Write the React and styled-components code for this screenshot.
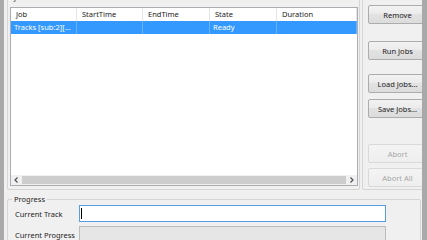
import styled, { createGlobalStyle } from "styled-components";

const GlobalStyle = createGlobalStyle`
  html, body {
    margin: 0;
    padding: 0;
    background: #f0f0f0;
  }
  body {
    font-family: "Noto Sans", "Open Sans", sans-serif;
    font-size: 7.5px;
    color: #1e1e1e;
  }
`;

const columns = [
  { name: "Job", width: 66 },
  { name: "StartTime", width: 66 },
  { name: "EndTime", width: 67 },
  { name: "State", width: 67 },
  { name: "Duration", width: 80 },
];

const jobs = [
  { job: "Tracks [sub:2][...", start: "", end: "", state: "Ready", duration: "" },
];

const actions = [
  { label: "Remove", gap: 0 },
  { label: "Run Jobs", gap: 17 },
  { label: "Load Jobs...", gap: 14 },
  { label: "Save Jobs...", gap: 6 },
  { label: "Abort", gap: 26, disabled: true },
  { label: "Abort All", gap: 5, disabled: true },
];

const gridCols = columns.map((c) => c.width + "px").join(" ");

const App = () => {
  return (
    <Window>
      <GlobalStyle />
      <TopRow>
        <JobsGroup>
          <GroupLabel>Jobs</GroupLabel>
          <ListBox>
            <Header>
              {columns.map((c) => (
                <HeaderCell key={c.name}>{c.name}</HeaderCell>
              ))}
            </Header>
            <Rows>
              {jobs.map((j, i) => (
                <Row key={i} $selected={i === 0}>
                  <Cell>{j.job}</Cell>
                  <Cell>{j.start}</Cell>
                  <Cell>{j.end}</Cell>
                  <Cell>{j.state}</Cell>
                  <Cell>{j.duration}</Cell>
                </Row>
              ))}
            </Rows>
            <HScroll>
              <ScrollArrow>
                <svg width="5" height="6" viewBox="0 0 5 6">
                  <path d="M3.5 0.5 L1 3 L3.5 5.5" fill="none" stroke="#505050" strokeWidth="1.2" />
                </svg>
              </ScrollArrow>
              <ScrollTrack>
                <ScrollThumb />
              </ScrollTrack>
              <ScrollArrow>
                <svg width="5" height="6" viewBox="0 0 5 6">
                  <path d="M1.5 0.5 L4 3 L1.5 5.5" fill="none" stroke="#505050" strokeWidth="1.2" />
                </svg>
              </ScrollArrow>
            </HScroll>
          </ListBox>
        </JobsGroup>
        <ActionsGroup>
          <GroupLabel>Actions</GroupLabel>
          {actions.map((a) => (
            <ActionButton key={a.label} $gap={a.gap} disabled={a.disabled}>
              {a.label}
            </ActionButton>
          ))}
        </ActionsGroup>
      </TopRow>
      <ProgressGroup>
        <GroupLabel>Progress</GroupLabel>
        <FieldRow>
          <FieldLabel>Current Track</FieldLabel>
          <TextField>
            <Caret />
          </TextField>
        </FieldRow>
        <FieldRow>
          <FieldLabel>Current Progress</FieldLabel>
          <ProgressBar />
        </FieldRow>
      </ProgressGroup>
    </Window>
  );
};

const Window = styled.div`
  width: 427px;
  height: 240px;
  box-sizing: border-box;
  overflow: hidden;
  display: flex;
  flex-direction: column;
  border-left: 4px solid #a9a9a9;
  border-right: 5px solid #a9a9a9;
  padding: 0 1px 0 3px;
  background: #f0f0f0;
`;

const TopRow = styled.div`
  display: flex;
  margin-top: -3px;
  gap: 2px;
`;

const Group = styled.div`
  position: relative;
  border: 1px solid #d5d5d5;
  border-radius: 2px;
  box-sizing: border-box;
`;

const GroupLabel = styled.span`
  position: absolute;
  top: -6px;
  left: 4px;
  padding: 0 2px;
  background: #f0f0f0;
  line-height: 11px;
`;

const JobsGroup = styled(Group)`
  flex: 1;
  padding: 9px 1px 3px 2px;
`;

const ListBox = styled.div`
  height: 179px;
  box-sizing: border-box;
  border: 1px solid #abadb3;
  background: #fff;
  display: flex;
  flex-direction: column;
  overflow: hidden;
`;

const Header = styled.div`
  display: grid;
  grid-template-columns: ${gridCols};
  height: 13px;
  flex: none;
`;

const HeaderCell = styled.div`
  border-right: 1px solid #e5e5e5;
  padding-left: 5px;
  line-height: 13px;
  white-space: nowrap;
  color: #222;
`;

const Rows = styled.div`
  flex: 1;
`;

const Row = styled.div`
  display: grid;
  grid-template-columns: ${gridCols};
  height: 13px;
  background: ${(p) => (p.$selected ? "#3399ff" : "transparent")};
  color: ${(p) => (p.$selected ? "#fff" : "#222")};
`;

const Cell = styled.div`
  border-right: 1px solid rgba(255, 255, 255, 0.25);
  padding-left: 3px;
  line-height: 13px;
  white-space: nowrap;
  overflow: hidden;
`;

const HScroll = styled.div`
  display: flex;
  height: 10px;
  flex: none;
  background: #f0f0f0;
`;

const ScrollArrow = styled.div`
  width: 11px;
  display: flex;
  align-items: center;
  justify-content: center;
`;

const ScrollTrack = styled.div`
  flex: 1;
  display: flex;
  padding: 1px 0;
`;

const ScrollThumb = styled.div`
  flex: 1;
  background: #cdcdcd;
`;

const ActionsGroup = styled(Group)`
  width: 72px;
  padding: 7px 0 0 5px;
  display: flex;
  flex-direction: column;
`;

const ActionButton = styled.button`
  width: 59px;
  height: 19px;
  margin-top: ${(p) => p.$gap}px;
  padding: 0;
  box-sizing: border-box;
  font: inherit;
  border: 1px solid ${(p) => (p.disabled ? "#d9d9d9" : "#acacac")};
  border-radius: 2px;
  background: ${(p) =>
    p.disabled
      ? "linear-gradient(#f4f4f4, #eeeeee)"
      : "linear-gradient(#f2f2f2, #ebebeb 50%, #e2e2e2 50%, #dcdcdc)"};
  color: ${(p) => (p.disabled ? "#a6a6a6" : "#1e1e1e")};
`;

const ProgressGroup = styled(Group)`
  margin-top: 9px;
  padding: 5px 34px 0 7px;
  display: flex;
  flex-direction: column;
  gap: 4px;
  height: 60px;
`;

const FieldRow = styled.div`
  display: flex;
  align-items: center;
`;

const FieldLabel = styled.span`
  width: 64px;
  flex: none;
  white-space: nowrap;
`;

const TextField = styled.div`
  position: relative;
  flex: 1;
  height: 17px;
  box-sizing: border-box;
  border: 1px solid #569de5;
  background: #fff;
`;

const Caret = styled.span`
  position: absolute;
  left: 1px;
  top: 2px;
  width: 1px;
  height: 11px;
  background: #000;
`;

const ProgressBar = styled.div`
  flex: 1;
  height: 17px;
  box-sizing: border-box;
  border: 1px solid #bcbcbc;
  background: #e6e6e6;
`;

export default App;
